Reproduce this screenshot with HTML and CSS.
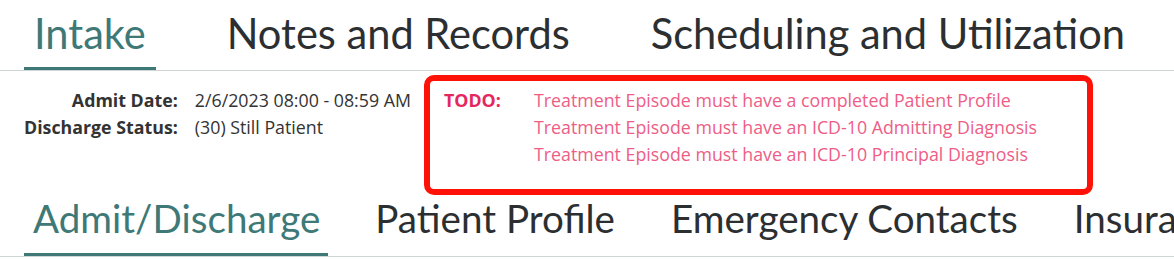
FILE: index.html
```html
<!DOCTYPE html>
<html lang="en">
<head>
<meta charset="utf-8">
<title>Intake</title>
<link rel="stylesheet" href="styles.css">
</head>
<body>
<nav class="tabs tabs-primary">
  <a class="tab active">Intake</a>
  <a class="tab">Notes and Records</a>
  <a class="tab">Scheduling and Utilization</a>
</nav>
<section class="details">
  <dl class="facts">
    <dt>Admit Date:</dt>
    <dd>2/6/2023 08:00 - 08:59 AM</dd>
    <dt>Discharge Status:</dt>
    <dd>(30) Still Patient</dd>
  </dl>
  <div class="todo">
    <div class="todo-label">TODO:</div>
    <ul class="todo-list">
      <li>Treatment Episode must have a completed Patient Profile</li>
      <li>Treatment Episode must have an ICD-10 Admitting Diagnosis</li>
      <li>Treatment Episode must have an ICD-10 Principal Diagnosis</li>
    </ul>
  </div>
</section>
<nav class="tabs tabs-secondary">
  <a class="tab active">Admit/Discharge</a>
  <a class="tab">Patient Profile</a>
  <a class="tab">Emergency Contacts</a>
  <a class="tab">Insurance</a>
</nav>
</body>
</html>
```
FILE: styles.css
```css
html, body {
  margin: 0;
  padding: 0;
  background: #ffffff;
  overflow: hidden;
}
body {
  width: 1174px;
  height: 260px;
  font-family: "Open Sans", "Liberation Sans", sans-serif;
  color: #2f3235;
}
.tabs {
  display: flex;
  flex-wrap: nowrap;
  white-space: nowrap;
  overflow: hidden;
  padding-left: 24px;
  border-bottom: 1px solid #d0d6d6;
  font-family: Lato, "Liberation Sans", sans-serif;
  color: #2c2f31;
}
.tab {
  display: block;
  flex: none;
  border-bottom: 4px solid transparent;
  margin-bottom: -1px;
  cursor: pointer;
}
.tab.active {
  color: #3e7977;
  border-bottom-color: #3e7977;
}
.tabs-primary {
  height: 70px;
}
.tabs-primary .tab {
  font-size: 41.6px;
  line-height: 50px;
  padding: 8px 10px 9px;
  margin-right: 61px;
}
.tabs-secondary {
  height: 61px;
}
.tabs-secondary .tab {
  font-size: 38.6px;
  line-height: 46px;
  padding: 0 9px 12px;
  margin-right: 38px;
}
.tabs-secondary .tab.active {
  padding: 0 8px 12px 9px;
}
.details {
  display: flex;
  align-items: flex-start;
  padding-left: 24px;
  height: 124px;
  box-sizing: border-box;
}
.facts {
  display: grid;
  grid-template-columns: max-content max-content;
  column-gap: 17px;
  margin: 0;
  padding-top: 16px;
  width: 400px;
  font-size: 17.8px;
  line-height: 27px;
}
.facts dt {
  font-weight: 700;
  text-align: right;
  color: #333333;
}
.facts dd {
  margin: 0;
  color: #333333;
}
.todo {
  display: grid;
  grid-template-columns: 90px max-content;
  margin-top: 4px;
  width: 669px;
  height: 120px;
  box-sizing: border-box;
  border: 6px solid #fe1208;
  border-radius: 10px;
  padding: 6px 14px;
  font-size: 17.8px;
  line-height: 27px;
}
.todo-label {
  font-weight: 700;
  color: #e4275f;
}
.todo-list {
  list-style: none;
  margin: 0;
  padding: 0;
  color: #ee5d86;
}
```
